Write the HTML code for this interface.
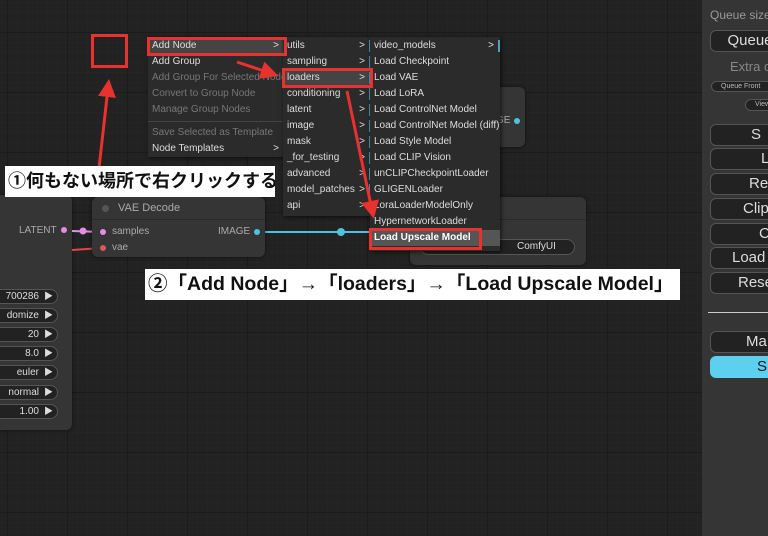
<!DOCTYPE html>
<html><head><meta charset="utf-8"><style>
*{margin:0;padding:0;box-sizing:border-box}
body{width:768px;height:536px;overflow:hidden;position:relative;font-family:"Liberation Sans","Noto Sans CJK JP",sans-serif;
background-color:#222;
background-image:linear-gradient(#1b1b1b 1px,transparent 1px),linear-gradient(90deg,#1b1b1b 1px,transparent 1px),linear-gradient(#252525 1px,transparent 1px),linear-gradient(90deg,#252525 1px,transparent 1px);
background-size:60px 60px,60px 60px,10px 10px,10px 10px;background-position:7px 32px,7px 32px,7px 2px,7px 2px}
.abs{position:absolute}
.node{position:absolute;background:#353535;border-radius:6px;box-shadow:0 0 4px #0008}
.menu{position:absolute;background:#2b2b2b;box-shadow:1px 1px 4px #000a;font-size:10px;color:#ddd}
.menu div{height:16px;line-height:16px;padding-left:4px;position:relative;white-space:nowrap;overflow:hidden}
.menu .sub::after{content:">";position:absolute;right:6px;top:0}
.menu .sub::before{content:"";position:absolute;right:0;top:2px;width:2px;height:12px;background:#4aa3c0}
.dis{color:#777}
.red{position:absolute;border:3px solid #e8322d}
.note{position:absolute;background:#fff;color:#111;font-weight:bold;font-size:18px;line-height:30px;padding-left:3px;white-space:nowrap;overflow:hidden}
.w{position:absolute;left:-12px;width:70px;height:15px;border:1px solid #555;border-radius:8px;background:#222;color:#ddd;font-size:10px;line-height:13px;text-align:right;padding-right:18px}
.w::after{content:"▶";position:absolute;right:4px;font-size:9px}
.pb{position:absolute;left:710px;width:80px;height:22px;border:1px solid #555;border-radius:6px;background:#222;color:#ddd;font-size:15px;line-height:20px;text-align:center}
</style></head><body>

<div class="node" style="left:-10px;top:195px;width:82px;height:235px">
<div class="abs" style="left:29px;top:30px;font-size:10px;color:#aaa">LATENT</div>
<div class="abs" style="left:71px;top:32px;width:6px;height:6px;border-radius:50%;background:#e58ce5"></div>
<div class="w" style="top:94px;left:-2px">700286</div>
<div class="w" style="top:113px;left:-2px">domize</div>
<div class="w" style="top:132px;left:-2px">20</div>
<div class="w" style="top:151px;left:-2px">8.0</div>
<div class="w" style="top:170px;left:-2px">euler</div>
<div class="w" style="top:190px;left:-2px">normal</div>
<div class="w" style="top:209px;left:-2px">1.00</div>
</div>

<svg class="abs" style="left:0;top:0" width="700" height="536">
<line x1="72" y1="231" x2="102" y2="232" stroke="#e58ce5" stroke-width="2"/>
<circle cx="83" cy="231" r="3.5" fill="#e58ce5"/>
<line x1="72" y1="250" x2="102" y2="248" stroke="#e04848" stroke-width="2"/>
<line x1="258" y1="232" x2="420" y2="232" stroke="#4cc3e0" stroke-width="2"/>
<circle cx="341" cy="232" r="4" fill="#4cc3e0"/>
</svg>

<div class="node" style="left:92px;top:197px;width:173px;height:60px">
<div class="abs" style="left:10px;top:8px;width:7px;height:7px;border-radius:50%;background:#555"></div>
<div class="abs" style="left:26px;top:5px;font-size:11px;color:#aaa">VAE Decode</div>
<div class="abs" style="left:0;top:22px;width:173px;height:1px;background:#2a2a2a"></div>
<div class="abs" style="left:8px;top:32px;width:6px;height:6px;border-radius:50%;background:#e58ce5"></div>
<div class="abs" style="left:20px;top:29px;font-size:10px;color:#aaa">samples</div>
<div class="abs" style="left:8px;top:48px;width:6px;height:6px;border-radius:50%;background:#e05555"></div>
<div class="abs" style="left:20px;top:45px;font-size:10px;color:#aaa">vae</div>
<div class="abs" style="left:126px;top:29px;font-size:10px;color:#aaa">IMAGE</div>
<div class="abs" style="left:162px;top:32px;width:6px;height:6px;border-radius:50%;background:#4cc3e0"></div>
</div>

<div class="node" style="left:470px;top:87px;width:55px;height:60px">
<div class="abs" style="left:26px;top:28px;font-size:10px;color:#aaa">GE</div>
<div class="abs" style="left:44px;top:31px;width:6px;height:6px;border-radius:50%;background:#4cc3e0"></div>
</div>
<div class="node" style="left:410px;top:197px;width:176px;height:68px">
<div class="abs" style="left:0;top:22px;width:176px;height:1px;background:#2a2a2a"></div>
<div class="abs" style="left:10px;top:42px;width:155px;height:16px;border:1px solid #555;border-radius:8px;background:#222;font-size:10px;color:#ddd;line-height:14px;padding-left:96px">ComfyUI</div>
<div class="abs" style="left:22px;top:43px;font-size:10px;color:#777">filename_prefix</div>
</div>

<div class="menu" style="left:148px;top:37px;width:137px;height:120px;padding-top:1px">
<div class="sub" style="background:#444">Add Node</div>
<div>Add Group</div>
<div class="dis">Add Group For Selected Nodes</div>
<div class="dis">Convert to Group Node</div>
<div class="dis">Manage Group Nodes</div>
<div style="height:4px;border-bottom:1px solid #444;margin-bottom:3px"></div>
<div class="dis">Save Selected as Template</div>
<div class="sub">Node Templates</div>
</div>
<div class="menu" style="left:283px;top:37px;width:88px;height:179px;padding-top:1px">
<div class="sub">utils</div><div class="sub">sampling</div><div class="sub" style="background:#444">loaders</div><div class="sub">conditioning</div><div class="sub">latent</div><div class="sub">image</div><div class="sub">mask</div><div class="sub">_for_testing</div><div class="sub">advanced</div><div class="sub">model_patches</div><div class="sub">api</div>
</div>
<div class="menu" style="left:370px;top:37px;width:130px;height:214px;padding-top:1px">
<div class="sub">video_models</div><div>Load Checkpoint</div><div>Load VAE</div><div>Load LoRA</div><div>Load ControlNet Model</div><div>Load ControlNet Model (diff)</div><div>Load Style Model</div><div>Load CLIP Vision</div><div>unCLIPCheckpointLoader</div><div>GLIGENLoader</div><div>LoraLoaderModelOnly</div><div>HypernetworkLoader</div><div style="background:#555;font-weight:bold;color:#fff">Load Upscale Model</div>
</div>

<div class="red" style="left:91px;top:34px;width:37px;height:34px"></div>
<div class="red" style="left:147px;top:37px;width:140px;height:19px"></div>
<div class="red" style="left:282px;top:68px;width:91px;height:20px"></div>
<div class="red" style="left:369px;top:228px;width:113px;height:22px"></div>

<svg class="abs" style="left:0;top:0" width="700" height="536">
<defs><marker id="a" markerWidth="6" markerHeight="6" refX="3" refY="3" orient="auto"><path d="M0,0 L6,3 L0,6 Z" fill="#e8322d"/></marker></defs>
<line x1="99" y1="168" x2="108" y2="88" stroke="#e8322d" stroke-width="3" marker-end="url(#a)"/>
<line x1="237" y1="62" x2="270" y2="73" stroke="#e8322d" stroke-width="3" marker-end="url(#a)"/>
<line x1="347" y1="91" x2="372" y2="210" stroke="#e8322d" stroke-width="3" marker-end="url(#a)"/>
</svg>

<div class="note" style="left:5px;top:166px;width:270px;height:31px">①何もない場所で右クリックする</div>
<div class="note" style="left:145px;top:269px;width:535px;height:31px;font-size:19.5px">②「Add Node」→「loaders」→「Load Upscale Model」</div>

<div class="abs" style="left:702px;top:0;width:66px;height:536px;background:#353535"></div>
<div class="abs" style="left:710px;top:8px;font-size:12px;color:#999;white-space:nowrap">Queue size</div>
<div class="pb" style="top:30px">Queue</div>
<div class="abs" style="left:730px;top:59px;font-size:13px;color:#888;white-space:nowrap">Extra op</div>
<div class="abs" style="left:711px;top:81px;width:70px;height:11px;border:1px solid #555;border-radius:6px;background:#222;font-size:7px;color:#bbb;line-height:9px;padding-left:9px;white-space:nowrap">Queue Front</div>
<div class="abs" style="left:745px;top:99px;width:40px;height:12px;border:1px solid #555;border-radius:6px;background:#222;font-size:7px;color:#bbb;line-height:10px;padding-left:9px">View</div>
<div class="pb" style="top:124px;padding-left:40px;text-align:left">S</div>
<div class="pb" style="top:148px;padding-left:50px;text-align:left">L</div>
<div class="pb" style="top:173px;padding-left:38px;text-align:left">Re</div>
<div class="pb" style="top:198px;padding-left:32px;text-align:left">Clip</div>
<div class="pb" style="top:223px;padding-left:48px;text-align:left">C</div>
<div class="pb" style="top:247px;padding-left:21px;text-align:left">Load</div>
<div class="pb" style="top:272px;padding-left:27px;text-align:left">Rese</div>
<div class="abs" style="left:708px;top:312px;width:60px;height:1px;background:#ccc"></div>
<div class="pb" style="top:331px;padding-left:35px;text-align:left">Ma</div>
<div class="pb" style="top:356px;padding-left:46px;text-align:left;background:#5cd0ee;color:#111;border-color:#5cd0ee">S</div>
</body></html>
